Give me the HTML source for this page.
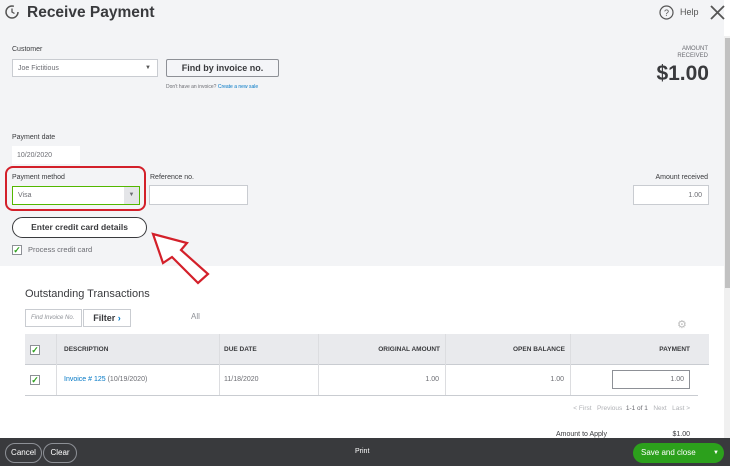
<!DOCTYPE html>
<html><head><style>
*{box-sizing:border-box;margin:0;padding:0}
body{width:730px;height:466px;overflow:hidden;font-family:"Liberation Sans",sans-serif;background:#fff;position:relative;color:#393a3d}
.a{position:absolute}
.top{left:0;top:0;width:724px;height:266px;background:#f3f4f6}
.lbl{font-size:7px;color:#393a3d}
.inp{background:#fff;border:1px solid #c9ccd1;font-size:7px;color:#6b6c72;padding-left:5px;display:flex;align-items:center}
.th{font-size:6.5px;font-weight:bold;color:#393a3d}
.td{font-size:7px;color:#6b6c72}
.cb{width:10px;height:10px;border:1px solid #8d9096;background:#fff;color:#2ca01c;font-size:9px;line-height:9px;text-align:center;font-weight:bold}
</style></head><body>
<div class="a top"></div>
<svg class="a" style="left:4px;top:4px" width="16" height="16" viewBox="0 0 16 16"><circle cx="8" cy="8" r="6" fill="none" stroke="#555" stroke-width="1.5" stroke-dasharray="30 8"/><path d="M8 4.5V8l2.5 1.5" stroke="#555" stroke-width="1.3" fill="none"/></svg>
<div class="a" style="left:27px;top:4px;font-size:15.5px;font-weight:bold;color:#393a3d">Receive Payment</div>
<svg class="a" style="left:659px;top:5px" width="15" height="15"><circle cx="7.5" cy="7.5" r="6.5" fill="none" stroke="#555" stroke-width="1.2"/><text x="7.5" y="11" font-size="9" text-anchor="middle" fill="#555" font-family="Liberation Sans">?</text></svg>
<div class="a" style="left:680px;top:7px;font-size:9px;color:#555">Help</div>
<svg class="a" style="left:710px;top:5px" width="15" height="15"><path d="M1 1L14 14M14 1L1 14" stroke="#555" stroke-width="1.8"/></svg>
<div class="a lbl" style="left:12px;top:46px">Customer</div>
<div class="a inp" style="left:12px;top:59px;width:146px;height:18px">Joe Fictitious<span style="position:absolute;right:6px;font-size:6px;color:#555">▼</span></div>
<div class="a" style="left:166px;top:59px;width:113px;height:18px;border:1px solid #8d9096;border-radius:2px;background:#f4f5f8;font-size:9px;font-weight:bold;text-align:center;line-height:16px">Find by invoice no.</div>
<div class="a" style="left:166px;top:84px;font-size:5px;color:#6b6c72">Don't have an invoice? <span style="color:#0077c5">Create a new sale</span></div>
<div class="a" style="left:640px;top:46px;width:68px;text-align:right;font-size:6px;color:#6b6c72;line-height:7px">AMOUNT<br>RECEIVED</div>
<div class="a" style="left:600px;top:62px;width:109px;text-align:right;font-size:21px;font-weight:bold;color:#393a3d">$1.00</div>
<div class="a lbl" style="left:12px;top:134px">Payment date</div>
<div class="a inp" style="left:12px;top:146px;width:68px;height:18px;border:none">10/20/2020</div>
<div class="a lbl" style="left:12px;top:174px">Payment method</div>
<div class="a inp" style="left:12px;top:186px;width:128px;height:19px;border-color:#53b700">Visa<span style="position:absolute;right:0;top:0;width:15px;height:17px;background:#e4e5e8;font-size:6px;text-align:center;line-height:17px">▼</span></div>
<div class="a" style="left:5px;top:166px;width:141px;height:45px;border:2.5px solid #d3202a;border-radius:8px"></div>
<div class="a lbl" style="left:150px;top:174px">Reference no.</div>
<div class="a inp" style="left:149px;top:185px;width:99px;height:20px"></div>
<div class="a lbl" style="left:620px;top:174px;width:88px;text-align:right">Amount received</div>
<div class="a inp" style="left:633px;top:185px;width:76px;height:20px;justify-content:flex-end;padding-right:6px">1.00</div>
<div class="a" style="left:12px;top:217px;width:135px;height:21px;border:1.5px solid #393a3d;border-radius:11px;background:#fff;font-size:8.5px;font-weight:bold;text-align:center;line-height:18px">Enter credit card details</div>
<div class="a cb" style="left:12px;top:245px">✓</div>
<div class="a" style="left:28px;top:245px;font-size:7.5px;color:#6b6c72">Process credit card</div>
<svg class="a" style="left:0;top:0" width="730" height="466"><polygon points="153,234 163,263 172,257 198,283 208,274 181,250 187,243" fill="#fff" stroke="#d3202a" stroke-width="2.2" stroke-linejoin="miter"/></svg>
<div class="a" style="left:724px;top:36px;width:6px;height:402px;background:#f0f0f0"></div>
<div class="a" style="left:725px;top:38px;width:5px;height:250px;background:#c1c1c1"></div>
<div class="a" style="left:25px;top:288px;font-size:11px;color:#393a3d">Outstanding Transactions</div>
<div class="a inp" style="left:25px;top:309px;width:57px;height:18px;font-style:italic;font-size:6px;color:#8d9096">Find Invoice No.</div>
<div class="a" style="left:83px;top:309px;width:48px;height:18px;border:1px solid #c9ccd1;background:#fff;font-size:9px;font-weight:bold;text-align:center;line-height:16px">Filter <span style="color:#0077c5">›</span></div>
<div class="a" style="left:191px;top:312px;font-size:8px;color:#8d9096">All</div>
<div class="a" style="left:677px;top:318px;font-size:11px;color:#bbb">⚙</div>
<div class="a" style="left:25px;top:334px;width:684px;height:31px;background:#e9eaed"></div>
<div class="a" style="left:25px;top:364px;width:684px;height:1px;background:#c9ccd1"></div>
<div class="a" style="left:25px;top:395px;width:673px;height:1px;background:#c9ccd1"></div>
<div class="a" style="left:56px;top:334px;width:1px;height:61px;background:#dcdde0"></div>
<div class="a" style="left:219px;top:334px;width:1px;height:61px;background:#dcdde0"></div>
<div class="a" style="left:318px;top:334px;width:1px;height:61px;background:#dcdde0"></div>
<div class="a" style="left:445px;top:334px;width:1px;height:61px;background:#dcdde0"></div>
<div class="a" style="left:570px;top:334px;width:1px;height:61px;background:#dcdde0"></div>
<div class="a cb" style="left:30px;top:345px">✓</div>
<div class="a th" style="left:64px;top:346px">DESCRIPTION</div>
<div class="a th" style="left:224px;top:346px">DUE DATE</div>
<div class="a th" style="left:330px;top:346px;width:110px;text-align:right">ORIGINAL AMOUNT</div>
<div class="a th" style="left:450px;top:346px;width:115px;text-align:right">OPEN BALANCE</div>
<div class="a th" style="left:600px;top:346px;width:90px;text-align:right">PAYMENT</div>
<div class="a cb" style="left:30px;top:375px">✓</div>
<div class="a td" style="left:64px;top:376px"><span style="color:#0077c5">Invoice # 125</span> (10/19/2020)</div>
<div class="a td" style="left:224px;top:376px">11/18/2020</div>
<div class="a td" style="left:380px;top:376px;width:59px;text-align:right">1.00</div>
<div class="a td" style="left:500px;top:376px;width:64px;text-align:right">1.00</div>
<div class="a inp" style="left:612px;top:370px;width:78px;height:19px;justify-content:flex-end;padding-right:5px;border-color:#8d9096">1.00</div>
<div class="a" style="left:520px;top:405px;width:170px;text-align:right;font-size:6.5px;color:#b0b2b6">&lt; First &nbsp; Previous &nbsp;<span style="color:#6b6c72">1-1 of 1</span> &nbsp; Next &nbsp; Last &gt;</div>
<div class="a" style="left:556px;top:431px;font-size:7px;color:#393a3d">Amount to Apply</div>
<div class="a" style="left:660px;top:431px;width:30px;text-align:right;font-size:7px">$1.00</div>
<div class="a" style="left:0;top:438px;width:730px;height:28px;background:#393a3d"></div>
<div class="a" style="left:5px;top:443px;width:37px;height:20px;border:1px solid #8d9096;border-radius:10px;color:#fff;font-size:8px;text-align:center;line-height:18px">Cancel</div>
<div class="a" style="left:43px;top:443px;width:34px;height:20px;border:1px solid #8d9096;border-radius:10px;color:#fff;font-size:8px;text-align:center;line-height:18px">Clear</div>
<div class="a" style="left:355px;top:448px;color:#fff;font-size:7px">Print</div>
<div class="a" style="left:633px;top:443px;width:91px;height:20px;background:#2ca01c;border-radius:10px;color:#fff;font-size:8px;line-height:20px;padding-left:8px">Save and close <span style="position:absolute;right:5px;font-size:6px">▼</span></div>
</body></html>
